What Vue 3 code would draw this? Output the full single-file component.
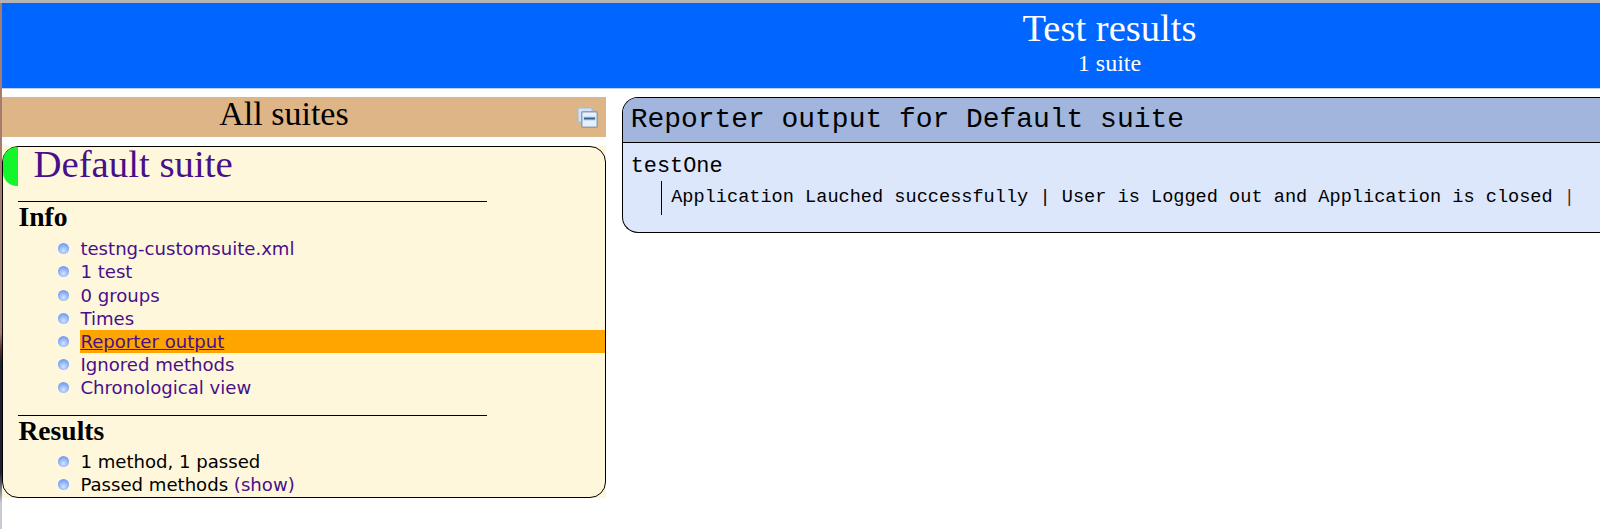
<script setup>
const info = ['testng-customsuite.xml', '1 test', '0 groups', 'Times', 'Reporter output', 'Ignored methods', 'Chronological view']
</script>

<template>
  <div class="page">
    <header class="top">
      <div class="title">Test results</div>
      <div class="sub">1 suite</div>
    </header>
    <div class="cols">
      <aside class="left">
        <div class="allbar">
          <span class="alltext">All suites</span>
          <svg class="collapse" width="21" height="21" viewBox="0 0 21 21">
            <rect x="0.75" y="0.75" width="14.5" height="14.5" rx="1" fill="#d3e3f2" stroke="#a6bdd3" stroke-width="1.5" />
            <rect x="4.75" y="4.75" width="15.5" height="15.5" rx="1" fill="#e8f1f9" stroke="#8d9fb6" stroke-width="1.5" />
            <rect x="6.5" y="9.5" width="12" height="4" fill="#b5cfe8" />
            <rect x="7" y="10.6" width="11" height="1.8" fill="#2a6299" />
          </svg>
        </div>
        <div class="suite">
          <div class="inner">
            <div class="tab"></div>
            <div class="name">Default suite</div>
            <div class="rule"></div>
            <h3>Info</h3>
            <ul>
              <li v-for="i in info" :key="i"><span class="dot"></span><a :class="{ sel: i === 'Reporter output' }"><span :class="{ und: i === 'Reporter output' }">{{ i }}</span></a></li>
            </ul>
            <div class="rule r2"></div>
            <h3>Results</h3>
            <ul class="res">
              <li><span class="dot"></span>1 method, 1 passed</li>
              <li><span class="dot"></span>Passed methods&nbsp;<a>(show)</a></li>
            </ul>
          </div>
        </div>
      </aside>
      <main class="right">
        <div class="panel">
          <div class="phead">Reporter output for Default suite</div>
          <div class="pbody">
            <div class="tname">testOne</div>
            <div class="out">Application Lauched successfully | User is Logged out and Application is closed <span class="red">|</span></div>
          </div>
        </div>
      </main>
    </div>
  </div>
</template>

<style>
html, body { margin: 0; background: #fff; overflow: hidden; }
</style>

<style scoped>
.page {
  width: 1600px;
  height: 529px;
  border-top: 3px solid #b4b4b4;
  box-sizing: border-box;
  font-family: "Liberation Serif", serif;
  background: linear-gradient(#a67c6e 0, #a67c6e 330px, #5a3a30 345px, #1c222a 360px, #1c222a 470px, #c8ccd2 500px) left top / 2px 100% no-repeat;
}
.top { height: 86px; margin-left: 2px; background: #0066ff; color: #fff; text-align: center; box-sizing: border-box; padding-top: 4px; padding-left: 617px; border-bottom: 1px solid #b9cff5; }
.title { font-size: 38.6px; line-height: 42px; }
.sub { font-size: 24px; line-height: 29px; }
.cols { display: flex; margin-top: 8px; }
.left { width: 604px; margin-left: 2px; flex: none; }
.allbar { height: 40px; background: #deb587; position: relative; text-align: center; font-size: 34px; line-height: 34px; }
.alltext { display: inline-block; margin-right: 40px; }
.collapse { position: absolute; left: 575px; top: 10px; }
.suite { height: 352px; margin-top: 9px; background: #fff7dc; }
.inner { position: relative; height: 100%; box-sizing: border-box; border: 1.6px solid #000; border-radius: 16px; padding-left: 15.4px; }
.tab { position: absolute; left: 0; top: 0; width: 14.8px; height: 39px; background: #14f52c; border-top-left-radius: 14px; border-bottom-left-radius: 14px; }
.name { font-size: 38.8px; line-height: 34px; color: #47108a; padding-left: 15px; }
.rule { width: 469px; border-top: 1px solid #000; margin-top: 20px; }
.r2 { margin-top: 16px; }
h3 { margin: 1px 0 0; font-size: 27.6px; line-height: 28px; font-weight: bold; color: #000; }
ul { list-style: none; margin: 6.3px 0 0; padding: 0 0 0 40px; }
.res { margin-top: 5px; }
li { display: flex; align-items: center; height: 23.1px; font-family: "DejaVu Sans", sans-serif; font-size: 18.1px; color: #000; }
.dot { width: 11px; height: 11px; border-radius: 50%; background: radial-gradient(circle at 50% 68%, #d6e5ff, #7fa8fa 60%, #5f8fee); margin-right: 11px; flex: none; }
a { color: #47108a; }
.sel { flex: 1; display: block; height: 23.1px; line-height: 23.1px; background: #ffa500; }
.und { text-decoration: underline; }
.right { margin-left: 16px; flex: 1; min-width: 0; }
.panel { width: 1040px; height: 136px; border: 1.6px solid #000; border-right: none; border-radius: 16px 0 0 16px; background: #dde7fb; overflow: hidden; box-sizing: border-box; font-family: "Liberation Mono", monospace; }
.phead { height: 44.9px; box-sizing: border-box; line-height: 43px; background: #a2b5dc; border-bottom: 1.5px solid #000; padding-left: 7.7px; font-size: 27.95px; }
.pbody { padding: 12px 7.7px 0; }
.tname { font-size: 21.9px; line-height: 24px; }
.out { margin: 2.5px 0 0 30.5px; padding-left: 9px; border-left: 1.5px solid #000; font-size: 18.6px; line-height: 34px; white-space: nowrap; }
.red { color: #6e1f10; }
</style>
